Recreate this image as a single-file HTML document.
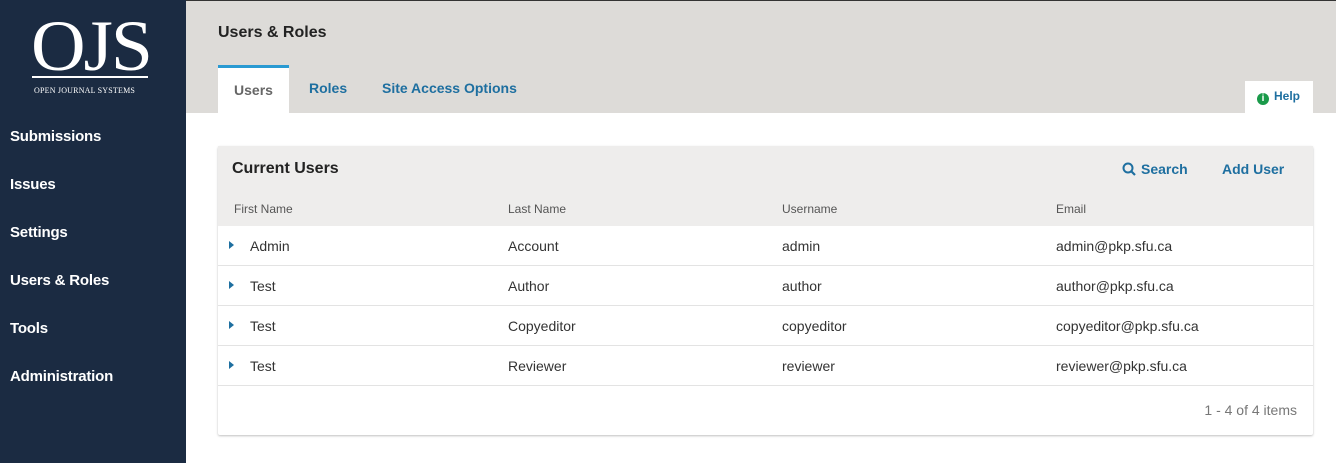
<!DOCTYPE html>
<html><head><meta charset="utf-8"><style>
*{box-sizing:border-box;margin:0;padding:0}
body{width:1336px;height:463px;overflow:hidden;font-family:"Liberation Sans",sans-serif;background:#fff;position:relative}
.side{position:absolute;left:0;top:0;width:186px;height:463px;background:#1b2b42}
.logo{position:absolute;left:31px;top:10px;color:#fff;font-family:"Liberation Serif",serif;font-size:72px;line-height:72px;letter-spacing:-2px;transform:scaleX(1.05);transform-origin:left}
.l{position:absolute;left:32px;top:76px;width:116px;height:2px;background:#fff}
.s{position:absolute;left:34px;top:86px;color:#fff;font-family:"Liberation Serif",serif;font-size:8px;line-height:10px;letter-spacing:0.2px;white-space:nowrap}
.nav{position:absolute;left:10px;color:#fff;font-weight:bold;font-size:15px;letter-spacing:-0.2px}
.hdr{position:absolute;left:186px;top:0;width:1150px;height:113px;background:#dddbd8;border-top:1px solid #333}
.title{position:absolute;left:218px;top:24px;font-size:16px;font-weight:bold;color:#222}
.tab{position:absolute;top:80px;font-size:14px;font-weight:bold;color:#1e6fa0}
.tabA{position:absolute;left:218px;top:65px;width:71px;height:48px;background:#fff;border-top:3px solid #2a9ad2;color:#666;font-weight:bold;font-size:14px;text-align:center;padding-top:14px}
.help{position:absolute;left:1245px;top:81px;width:68px;height:32px;background:#fff;font-size:12px;font-weight:bold;color:#1e6fa0;padding:8px 0 0 12px}
.help i{display:inline-block;width:12px;height:12px;border-radius:50%;background:#1a9a4a;color:#fff;font-size:10px;font-weight:bold;font-style:normal;text-align:center;line-height:12px;margin-right:5px;vertical-align:-1px}
.panel{position:absolute;left:218px;top:146px;width:1095px;height:289px;border-radius:2px;box-shadow:0 1px 2px rgba(0,0,0,.25)}
.ph{height:80px;background:#eeedec;position:relative}
.ph b{position:absolute;left:14px;top:14px;font-size:16px;color:#222}
.ph .a{position:absolute;top:15px;font-size:14px;font-weight:bold;color:#1e6fa0}
.col{position:absolute;top:56px;font-size:12px;color:#555}
.row{height:40px;border-bottom:1px solid #e3e3e3;position:relative;font-size:14px;color:#333}
.row span{position:absolute;top:12px}
.row .t{left:11px;top:15px;width:0;height:0;border-left:5px solid #1e6fa0;border-top:4px solid transparent;border-bottom:4px solid transparent}
.foot{position:absolute;right:16px;bottom:17px;font-size:14px;color:#777}
</style></head><body>
<div class="side">
<div class="logo">OJS</div><div class="l"></div><div class="s">OPEN JOURNAL SYSTEMS</div>
<div class="nav" style="top:128px">Submissions</div>
<div class="nav" style="top:176px">Issues</div>
<div class="nav" style="top:224px">Settings</div>
<div class="nav" style="top:272px">Users &amp; Roles</div>
<div class="nav" style="top:320px">Tools</div>
<div class="nav" style="top:368px">Administration</div>
</div>
<div class="hdr"></div>
<div class="title">Users &amp; Roles</div>
<div class="tabA">Users</div>
<div class="tab" style="left:309px">Roles</div>
<div class="tab" style="left:382px">Site Access Options</div>
<div class="help"><i>i</i>Help</div>
<div class="panel">
<div class="ph"><b>Current Users</b>
<span class="a" style="left:904px"><svg width="14" height="14" viewBox="0 0 14 14" style="vertical-align:-2px;margin-right:5px"><circle cx="6" cy="6" r="4.5" fill="none" stroke="#1e6fa0" stroke-width="2"/><path d="M9 9l4 4" stroke="#1e6fa0" stroke-width="2.2"/></svg>Search</span>
<span class="a" style="left:1004px">Add User</span>
<span class="col" style="left:16px">First Name</span><span class="col" style="left:290px">Last Name</span><span class="col" style="left:564px">Username</span><span class="col" style="left:838px">Email</span></div>
<div class="row"><span class="t"></span><span style="left:32px">Admin</span><span style="left:290px">Account</span><span style="left:564px">admin</span><span style="left:838px">admin@pkp.sfu.ca</span></div>
<div class="row"><span class="t"></span><span style="left:32px">Test</span><span style="left:290px">Author</span><span style="left:564px">author</span><span style="left:838px">author@pkp.sfu.ca</span></div>
<div class="row"><span class="t"></span><span style="left:32px">Test</span><span style="left:290px">Copyeditor</span><span style="left:564px">copyeditor</span><span style="left:838px">copyeditor@pkp.sfu.ca</span></div>
<div class="row"><span class="t"></span><span style="left:32px">Test</span><span style="left:290px">Reviewer</span><span style="left:564px">reviewer</span><span style="left:838px">reviewer@pkp.sfu.ca</span></div>
<div class="foot">1 - 4 of 4 items</div>
</div>
</body></html>
